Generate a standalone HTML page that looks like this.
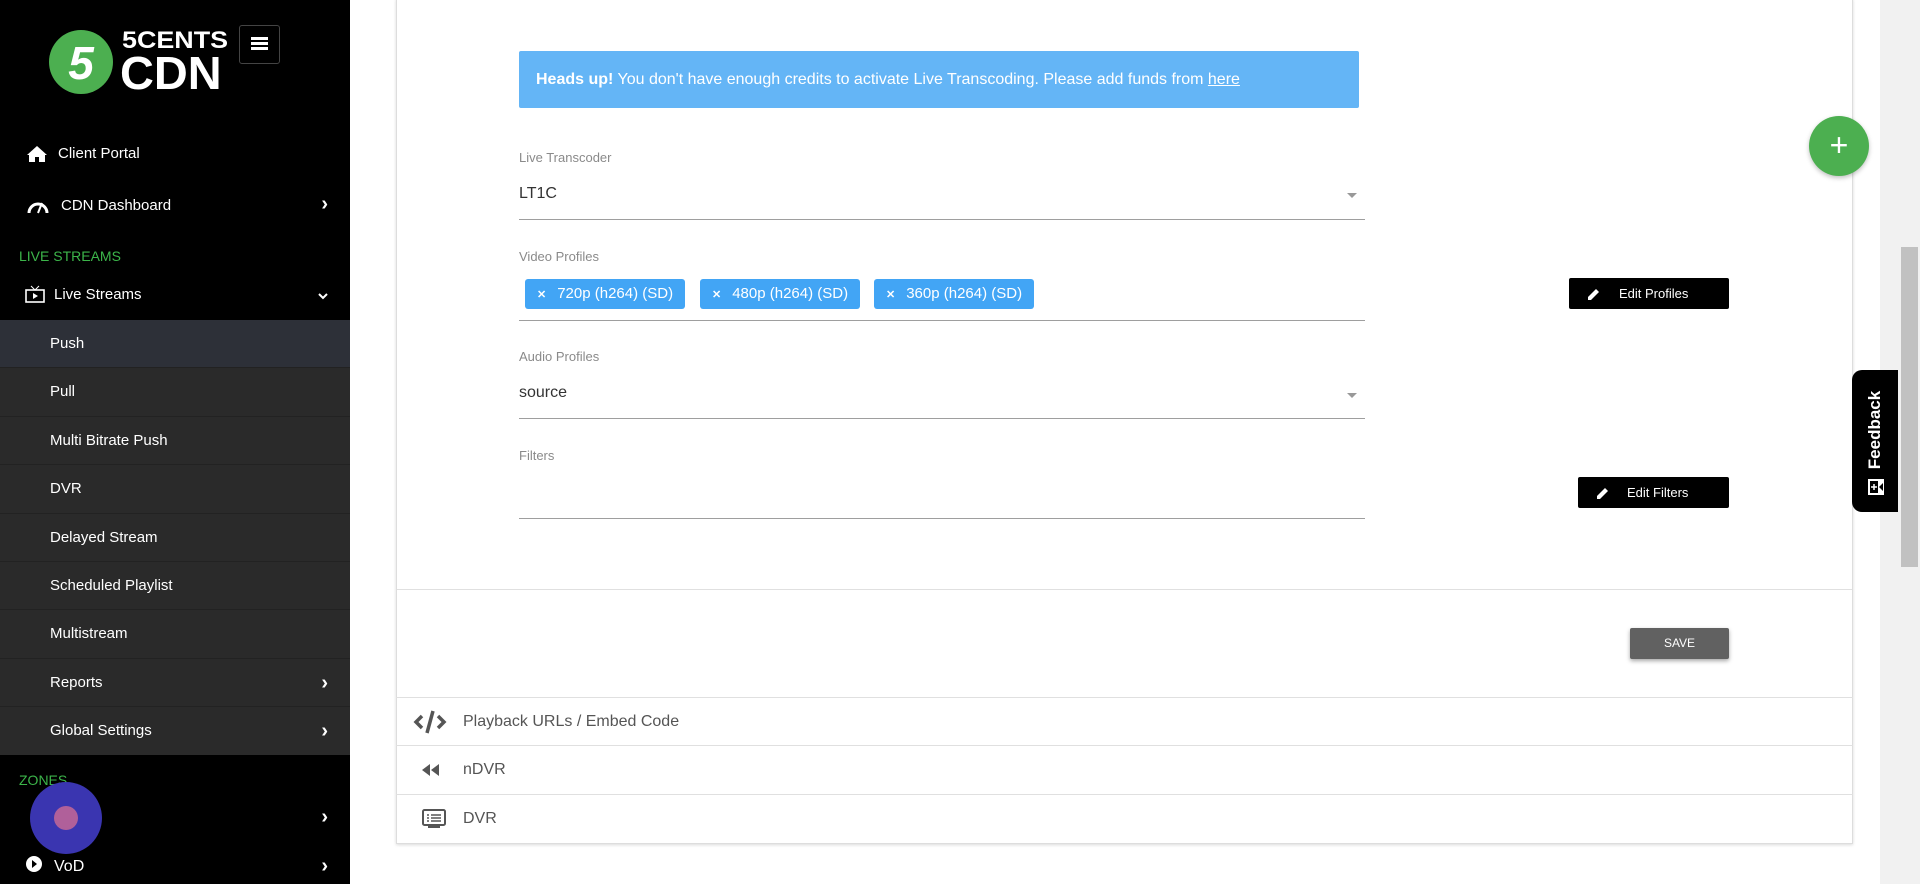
<!DOCTYPE html>
<html><head><meta charset="utf-8"><style>
*{box-sizing:border-box;margin:0;padding:0}
body{width:1920px;height:884px;overflow:hidden;background:#fff;font-family:"Liberation Sans",Arial,sans-serif;position:relative}
.abs{position:absolute}
#sb{left:0;top:0;width:350px;height:884px;background:#000;color:#fff}
.item{position:absolute;left:0;width:350px;font-size:15px;color:#fff}
.sub{position:absolute;left:0;width:350px;height:48.4px;background:#2a2a2a;box-shadow:inset 0 -1px 0 #222;color:#fff;font-size:15px;line-height:48px;padding-left:50px}
.chev{position:absolute;right:22px;top:0;font-size:20px;font-weight:bold}
.lbl{position:absolute;left:519px;font-size:13px;color:#8a8a8a}
.line{position:absolute;left:519px;width:846px;height:1px;background:#9e9e9e}
.chip{position:absolute;top:279px;height:30px;background:#42a5f5;color:#fff;border-radius:3px;font-size:15px;line-height:30px;padding:0 12px;white-space:nowrap}
.chip b{font-size:11px;margin-right:11px}
.btn{position:absolute;background:#000;color:#fff;font-size:13px;border-radius:2px;line-height:31px}
.row{position:absolute;left:396px;width:1457px;height:48px;border-top:1px solid #e0e0e0;font-size:16px;color:#555;line-height:48px}
.row span{position:absolute;left:67px}
</style></head><body>
<div id="sb" class="abs">
  <svg class="abs" style="left:48px;top:29px" width="66" height="66"><circle cx="33" cy="33" r="32" fill="#4caf50"/><text x="33" y="50" text-anchor="middle" font-family="Liberation Sans" font-weight="bold" font-style="italic" font-size="46" fill="#fff">5</text></svg>
  <div class="abs" style="left:122px;top:29px;font-weight:bold;font-size:24px;line-height:24px;transform:scaleX(1.12);transform-origin:left">5CENTS</div>
  <div class="abs" style="left:120px;top:50px;font-weight:bold;font-size:46px;line-height:46px;transform:scaleX(1.02);transform-origin:left">CDN</div>
  <div class="abs" style="left:239px;top:25px;width:41px;height:39px;border:1px solid #444;border-radius:3px"></div>
  <div class="abs" style="left:251px;top:37px;width:17px;height:3px;background:#fff;box-shadow:0 5px 0 #fff,0 10px 0 #fff"></div>
  <svg class="abs" style="left:26px;top:145px" width="22" height="18" viewBox="0 0 22 18"><path d="M11 1 L1 10 L3 10 L3 17 L9 17 L9 12 L13 12 L13 17 L19 17 L19 10 L21 10 Z" fill="#fff"/></svg>
  <div class="item" style="left:58px;top:145px">Client Portal</div>
  <svg class="abs" style="left:27px;top:198px" width="22" height="16" viewBox="0 0 22 16"><path d="M2 15 A9 9 0 0 1 20 15" stroke="#fff" stroke-width="3" fill="none"/><path d="M11 15 L15 5" stroke="#fff" stroke-width="2"/></svg>
  <div class="item" style="left:61px;top:197px">CDN Dashboard</div><div class="item" style="top:193px"><span class="chev">›</span></div>
  <div class="item" style="left:19px;top:248px;color:#3cb54a;font-size:14px">LIVE STREAMS</div>
  <svg class="abs" style="left:25px;top:285px" width="20" height="18" viewBox="0 0 20 18"><rect x="1" y="5" width="18" height="12" fill="none" stroke="#fff" stroke-width="1.6"/><path d="M8 8 L13 11 L8 14Z" fill="#fff"/><path d="M6 1 L10 5 L14 1" stroke="#fff" fill="none"/></svg>
  <div class="item" style="left:54px;top:286px">Live Streams</div>
  <svg class="abs" style="left:318px;top:292px" width="10" height="8"><path d="M1 2 L5 6 L9 2" stroke="#fff" stroke-width="2" fill="none"/></svg>
  <div class="sub" style="top:320px;background:#2d3038">Push</div>
  <div class="sub" style="top:368.4px">Pull</div>
  <div class="sub" style="top:416.8px">Multi Bitrate Push</div>
  <div class="sub" style="top:465.2px">DVR</div>
  <div class="sub" style="top:513.6px">Delayed Stream</div>
  <div class="sub" style="top:562px">Scheduled Playlist</div>
  <div class="sub" style="top:610.4px">Multistream</div>
  <div class="sub" style="top:658.8px">Reports<span class="chev">›</span></div>
  <div class="sub" style="top:707.2px;height:48px;box-shadow:none">Global Settings<span class="chev">›</span></div>
  <div class="item" style="left:19px;top:772px;color:#3cb54a;font-size:14px">ZONES</div>
  <div class="item" style="top:806px"><span class="chev">›</span></div>
  <div class="item" style="top:855px"><span class="chev">›</span></div>
  <svg class="abs" style="left:25px;top:855px" width="18" height="18"><circle cx="9" cy="9" r="8" fill="#fff"/><path d="M7 5 L12 9 L7 13Z" fill="#000"/></svg>
  <div class="item" style="left:54px;top:858px;font-size:16px">VoD</div>
  <div class="abs" style="left:30px;top:782px;width:72px;height:72px;border-radius:50%;background:#3a35b0"></div>
  <div class="abs" style="left:54px;top:806px;width:24px;height:24px;border-radius:50%;background:#b0609a"></div>
</div>

<div class="abs" style="left:396px;top:-2px;width:1457px;height:846px;border:1px solid #ddd;border-top:none;box-shadow:0 1px 3px rgba(0,0,0,.15);background:#fff"></div>
<div class="abs" style="left:1880px;top:0;width:40px;height:884px;background:#f1f1f1"></div>
<div class="abs" style="left:1901px;top:247px;width:17px;height:320px;background:#c1c1c1"></div>

<div class="abs" style="left:519px;top:51px;width:840px;height:57px;background:#64b5f6;border-radius:2px;color:#fff;font-size:16px;line-height:57px;padding-left:17px"><b>Heads up!</b> You don't have enough credits to activate Live Transcoding. Please add funds from <u>here</u></div>

<div class="lbl" style="top:150px">Live Transcoder</div>
<div class="abs" style="left:519px;top:185px;font-size:16px;color:#333">LT1C</div>
<div class="abs" style="left:1347px;top:193px;border:5px solid transparent;border-top:5px solid #999"></div>
<div class="line" style="top:219px"></div>

<div class="lbl" style="top:249px">Video Profiles</div>
<div class="chip" style="left:525px"><b>✕</b>720p (h264) (SD)</div>
<div class="chip" style="left:700px"><b>✕</b>480p (h264) (SD)</div>
<div class="chip" style="left:874px"><b>✕</b>360p (h264) (SD)</div>
<div class="line" style="top:320px"></div>
<div class="btn" style="left:1569px;top:278px;width:160px;padding-left:50px">Edit Profiles</div>
<svg class="abs" style="left:1587px;top:287px" width="14" height="14" viewBox="0 0 14 14"><path d="M1 13 L1 10 L9 2 L12 5 L4 13Z" fill="#fff"/></svg>

<div class="lbl" style="top:349px">Audio Profiles</div>
<div class="abs" style="left:519px;top:384px;font-size:16px;color:#333">source</div>
<div class="abs" style="left:1347px;top:393px;border:5px solid transparent;border-top:5px solid #999"></div>
<div class="line" style="top:418px"></div>

<div class="lbl" style="top:448px">Filters</div>
<div class="line" style="top:518px"></div>
<div class="btn" style="left:1578px;top:477px;width:151px;padding-left:49px">Edit Filters</div>
<svg class="abs" style="left:1596px;top:486px" width="14" height="14" viewBox="0 0 14 14"><path d="M1 13 L1 10 L9 2 L12 5 L4 13Z" fill="#fff"/></svg>

<div class="abs" style="left:397px;top:589px;width:1455px;height:1px;background:#e0e0e0"></div>
<div class="abs" style="left:1630px;top:628px;width:99px;height:31px;background:#616161;color:#fff;font-size:12px;text-align:center;line-height:31px;border-radius:2px;box-shadow:0 2px 4px rgba(0,0,0,.35)">SAVE</div>

<div class="row" style="top:697px"><svg class="abs" style="left:17px;top:12px" width="34" height="24" viewBox="0 0 34 24"><path d="M9 6 L3 12 L9 18 M25 6 L31 12 L25 18" stroke="#555" stroke-width="3.5" fill="none"/><path d="M20 1 L14 23" stroke="#555" stroke-width="3.5"/></svg><span>Playback URLs / Embed Code</span></div>
<div class="row" style="top:745px"><svg class="abs" style="left:25px;top:18px" width="20" height="12" viewBox="0 0 20 12"><path d="M9 0 L1 6 L9 12Z M18 0 L10 6 L18 12Z" fill="#555"/></svg><span>nDVR</span></div>
<div class="row" style="top:794px;height:50px"><svg class="abs" style="left:26px;top:14px" width="24" height="20" viewBox="0 0 24 20"><rect x="1" y="1" width="22" height="15" rx="1.5" fill="none" stroke="#555" stroke-width="2"/><path d="M5 6h2M9 6h10M5 9h2M9 9h10M5 12h2M9 12h10" stroke="#555" stroke-width="1.6"/><rect x="6" y="17" width="12" height="2" fill="#555"/></svg><span>DVR</span></div>

<div class="abs" style="left:1809px;top:116px;width:60px;height:60px;border-radius:50%;background:#4caf50;box-shadow:0 2px 5px rgba(0,0,0,.25);color:#fff;font-size:32px;text-align:center;line-height:58px">+</div>

<div class="abs" style="left:1852px;top:370px;width:46px;height:142px;background:#000;border-radius:10px 0 0 10px"></div>
<div class="abs" style="left:1829px;top:420px;width:92px;height:20px;transform:rotate(-90deg);color:#fff;font-size:17px;font-weight:bold;text-align:center;line-height:20px;white-space:nowrap">Feedback</div>
<svg class="abs" style="left:1867px;top:478px" width="18" height="18" viewBox="0 0 18 18"><rect x="1" y="1" width="16" height="16" fill="#fff"/><rect x="3" y="3" width="8" height="12" fill="#000"/><path d="M7 6v6M4 9h6" stroke="#fff" stroke-width="1.5"/><path d="M12 9 L16 5 L16 13Z" fill="#000"/></svg>
</body></html>
